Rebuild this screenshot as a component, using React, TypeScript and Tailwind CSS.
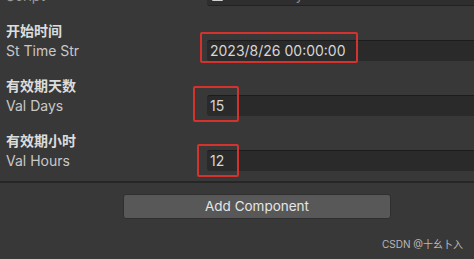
import React from "react";

const font = { fontFamily: 'Inter, "Noto Sans CJK SC", "Noto Sans", sans-serif' };

function Field({ value, box }: { value: string; box: string }) {
  return (
    <div className="relative ml-[207px] flex-1 h-[21px] bg-[#2a2a2a] border-t border-[#1c1c1c] rounded-l-[3px] flex items-center pl-[3px] text-[14px] text-[#d6d6d6]">
      <span className="leading-none">{value}</span>
      <div className={"absolute border-2 border-[#d3332c] rounded-[2px] " + box} />
    </div>
  );
}

function Row({ zh, en, value, box }: { zh: string; en: string; value: string; box: string }) {
  return (
    <div className="flex flex-col">
      <div className="h-[18px] pl-[6px] flex items-center text-[14px] font-bold text-[#dcdcdc] leading-none">{zh}</div>
      <div className="flex items-center h-[21px]">
        <div className="absolute pl-[6px] text-[14px] text-[#c8c8c8] leading-none">{en}</div>
        <Field value={value} box={box} />
      </div>
    </div>
  );
}

export default function App() {
  return (
    <div className="w-[474px] h-[259px] bg-[#383838] overflow-hidden flex flex-col" style={font}>
      <div className="flex items-center h-[21px] -mt-[15px]">
        <div className="pl-[6px] w-[207px] text-[14px] text-[#9a9a9a] leading-none">Script</div>
        <div className="flex-1 h-[21px] bg-[#2e2e2e] border-b border-[#222] rounded-l-[3px] flex items-center pl-[5px] gap-[3px] text-[14px] text-[#8a8a8a]">
          <div className="w-[11px] h-[11px] bg-[#cfcfcf] rounded-[1px]" />
          <span className="leading-none">AutoHotkeys</span>
        </div>
      </div>
      <div className="mt-[16px] flex flex-col gap-[16px]">
        <Row zh="开始时间" en="St Time Str" value="2023/8/26 00:00:00" box="left-[-7px] top-[-9px] w-[158px] h-[31px]" />
        <Row zh="有效期天数" en="Val Days" value="15" box="left-[-14px] top-[-10px] w-[46px] h-[36px]" />
        <Row zh="有效期小时" en="Val Hours" value="12" box="left-[-10px] top-[-7px] w-[42px] h-[33px]" />
      </div>
      <div className="mt-[10px] h-[2px] bg-[#262626]" />
      <div className="mt-[11px] ml-[123px] w-[268px] h-[25px] bg-[#585858] border border-[#2f2f2f] rounded-[3px] flex items-center justify-center text-[13.5px] text-[#e6e6e6]">
        Add Component
      </div>
      <div className="mt-[20px] flex justify-end pr-[11px] text-[10px] text-[#b8b8b8] leading-none">
        CSDN @十幺卜入
      </div>
    </div>
  );
}
